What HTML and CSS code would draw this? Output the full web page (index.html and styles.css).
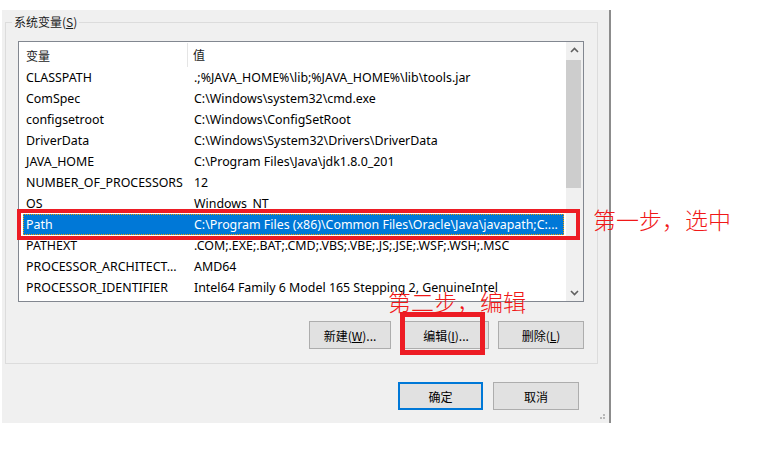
FILE: index.html
```html
<!DOCTYPE html>
<html lang="zh-CN">
<head>
<meta charset="utf-8">
<title>系统变量</title>
<link rel="stylesheet" href="styles.css">
</head>
<body>
<div class="dialog">
  <fieldset class="group">
    <legend class="group-label">系统变量(<u>S</u>)</legend>
    <div class="listbox">
      <div class="list-main">
        <div class="list-header">
          <div class="hcol hname">变量</div>
          <div class="hcol hval">值</div>
        </div>
        <div class="rows">
          <div class="row"><span class="cname">CLASSPATH</span><span class="cval">.;%JAVA_HOME%\lib;%JAVA_HOME%\lib\tools.jar</span></div>
          <div class="row"><span class="cname">ComSpec</span><span class="cval">C:\Windows\system32\cmd.exe</span></div>
          <div class="row"><span class="cname">configsetroot</span><span class="cval">C:\Windows\ConfigSetRoot</span></div>
          <div class="row"><span class="cname">DriverData</span><span class="cval">C:\Windows\System32\Drivers\DriverData</span></div>
          <div class="row"><span class="cname">JAVA_HOME</span><span class="cval">C:\Program Files\Java\jdk1.8.0_201</span></div>
          <div class="row"><span class="cname">NUMBER_OF_PROCESSORS</span><span class="cval">12</span></div>
          <div class="row"><span class="cname">OS</span><span class="cval">Windows_NT</span></div>
          <div class="row selected"><span class="cname">Path</span><span class="cval">C:\Program Files (x86)\Common Files\Oracle\Java\javapath;C:...</span></div>
          <div class="row"><span class="cname">PATHEXT</span><span class="cval">.COM;.EXE;.BAT;.CMD;.VBS;.VBE;.JS;.JSE;.WSF;.WSH;.MSC</span></div>
          <div class="row"><span class="cname">PROCESSOR_ARCHITECT...</span><span class="cval">AMD64</span></div>
          <div class="row"><span class="cname">PROCESSOR_IDENTIFIER</span><span class="cval">Intel64 Family 6 Model 165 Stepping 2, GenuineIntel</span></div>
        </div>
      </div>
      <div class="scrollbar">
        <div class="sb-btn">
          <svg width="17" height="17" viewBox="0 0 17 17"><polyline points="5,10 8.5,6.5 12,10" fill="none" stroke="#606060" stroke-width="1.6"/></svg>
        </div>
        <div class="sb-track">
          <div class="sb-thumb"></div>
        </div>
        <div class="sb-btn">
          <svg width="17" height="17" viewBox="0 0 17 17"><polyline points="5,7 8.5,10.5 12,7" fill="none" stroke="#606060" stroke-width="1.6"/></svg>
        </div>
      </div>
    </div>
    <div class="group-buttons">
      <button class="btn btn-new">新建(<u>W</u>)...</button>
      <button class="btn btn-edit">编辑(<u>I</u>)...</button>
      <button class="btn btn-del">删除(<u>L</u>)</button>
    </div>
  </fieldset>
  <div class="dialog-buttons">
    <button class="btn btn-ok">确定</button>
    <button class="btn btn-cancel">取消</button>
  </div>
  <svg class="grip" width="8" height="8" viewBox="0 0 8 8">
    <rect x="5" y="1" width="2" height="2" fill="#b8b8b8"/>
    <rect x="2" y="4" width="2" height="2" fill="#b8b8b8"/>
    <rect x="5" y="4" width="2" height="2" fill="#b8b8b8"/>
  </svg>
</div>

<div class="mark mark-row"></div>
<div class="mark mark-btn"></div>
<div class="note note-1">第一步，选中</div>
<div class="note note-2">第二步，编辑</div>
</body>
</html>
```

FILE: styles.css
```css
* { box-sizing: border-box; }

html, body {
  margin: 0;
}

body {
  position: relative;
  width: 768px;
  height: 450px;
  overflow: hidden;
  background: #ffffff;
  padding: 10px 0 0 2px;
  font-family: "Noto Sans", "Noto Sans CJK SC", sans-serif;
  font-size: 12px;
  color: #000;
}

.dialog {
  position: relative;
  width: 609px;
  height: 413px;
  background: #f0f0f0;
  border-right: 2px solid #8c8c8c;
  padding: 4px 0 0 3px;
}

.group {
  width: 593px;
  height: 350px;
  margin: 0;
  padding: 11px 0 0 6px;
  border: 1px solid #dcdcdc;
  min-width: 0;
}

.group-label {
  padding: 0 2px;
  margin: 0;
  height: 16px;
  line-height: 16px;
  font-family: "Noto Sans CJK SC", sans-serif;
  font-size: 12px;
  color: #1a1a1a;
}

.listbox {
  margin-left: 6px;
  width: 566px;
  height: 261px;
  border: 1px solid #828790;
  background: #fff;
  display: flex;
}

.list-main {
  flex: 1;
  min-width: 0;
  display: flex;
  flex-direction: column;
  overflow: hidden;
}

.list-header {
  display: flex;
  height: 25px;
  line-height: 25px;
  flex: none;
}

.hcol {
  font-family: "Noto Sans CJK SC", sans-serif;
  font-size: 12px;
  color: #1a1a1a;
}

.hname {
  width: 169px;
  padding-left: 7px;
  border-right: 1px solid #e5e5e5;
  margin: 1px 0 0;
}

.hval {
  flex: 1;
  padding-left: 5px;
}

.rows {
  padding: 0 2px 0 4px;
}

.row {
  display: flex;
  height: 21px;
  line-height: 21px;
  font-size: 12.4px;
  white-space: nowrap;
  color: #000;
}

.cname {
  width: 165px;
  flex: none;
  padding-left: 3px;
  overflow: hidden;
  text-overflow: ellipsis;
}

.cval {
  flex: 1;
  min-width: 0;
  padding-left: 6px;
  overflow: hidden;
  text-overflow: ellipsis;
}

.row.selected {
  background: #0078d7;
  color: #fff;
  outline: 1px dotted #f5a000;
  outline-offset: -1px;
}

.scrollbar {
  width: 17px;
  flex: none;
  background: #f0f0f0;
  display: flex;
  flex-direction: column;
}

.sb-btn {
  height: 17px;
  flex: none;
}

.sb-btn svg { display: block; }

.sb-track {
  flex: 1;
  padding-top: 1px;
}

.sb-thumb {
  width: 15px;
  height: 128px;
  background: #cdcdcd;
}

.group-buttons {
  margin: 19px 0 0 6px;
  width: 566px;
  display: flex;
  justify-content: flex-end;
}

.btn {
  height: 28px;
  margin: 0;
  padding: 0;
  background: #e1e1e1;
  border: 1px solid #adadad;
  font-family: "Noto Sans CJK SC", sans-serif;
  font-size: 12px;
  color: #000;
  text-align: center;
}

.btn-new { width: 82px; margin-right: 12px; }
.btn-edit { width: 86px; margin-right: 9px; }
.btn-del { width: 86px; }

.dialog-buttons {
  width: 593px;
  margin-top: 18px;
  padding-right: 19px;
  display: flex;
  justify-content: flex-end;
  gap: 10px;
}

.btn-ok {
  width: 85px;
  border: 2px solid #0078d7;
}

.btn-cancel { width: 86px; }

.grip {
  position: absolute;
  right: 3px;
  bottom: 2px;
}

/* annotations drawn over the screenshot */
.mark {
  position: absolute;
  border-style: solid;
  border-color: #ed1c24;
}

.mark-row {
  left: 17px;
  top: 209px;
  width: 563px;
  height: 31px;
  border-width: 4px;
}

.mark-btn {
  left: 400px;
  top: 312px;
  width: 85px;
  height: 43px;
  border-width: 5px;
}

.note {
  position: absolute;
  font-family: "Noto Sans CJK SC", sans-serif;
  font-weight: 300;
  font-size: 23px;
  line-height: 1;
  color: #f01818;
  white-space: nowrap;
}

.note-1 { left: 593px; top: 208px; }
.note-2 { left: 388px; top: 290px; }
```
